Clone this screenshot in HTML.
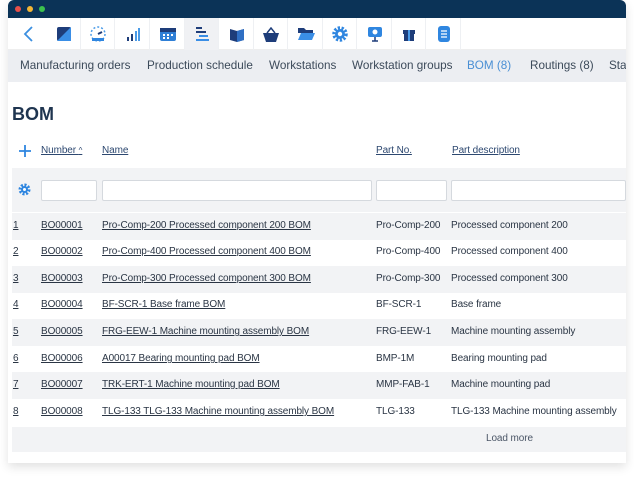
<!DOCTYPE html>
<html><head><style>
*{box-sizing:border-box;margin:0;padding:0}
body{width:634px;height:479px;background:#fff;font-family:"Liberation Sans",sans-serif;position:relative;overflow:hidden}
.win{position:absolute;left:8px;top:0;width:618px;height:463px;background:#fff;box-shadow:0 4px 10px rgba(0,0,0,.12);border-radius:6px 6px 0 0;overflow:hidden}
.top{height:18px;background:#0b3357;position:relative}
.dot{position:absolute;top:6px;width:6px;height:6px;border-radius:50%}
.tool{height:32px;position:relative;border-bottom:1px solid #eee}
.cell{position:absolute;top:0;height:32px;width:34px;border-right:1px solid #eef0f3;display:flex;align-items:center;justify-content:center}
.tabs{height:32px;background:#eceef2;font-size:11.7px;color:#3c4a5a;position:relative}
.tabs span{position:absolute;top:9px;white-space:nowrap}
h1{position:absolute;left:12px;top:104px;font-size:18px;color:#1f3550;font-weight:bold}
.a{position:absolute;font-size:10px;letter-spacing:-0.1px;color:#2a3544;white-space:nowrap}
.u{text-decoration:underline}
.hdr{color:#2d4870}
.row{position:absolute;left:12px;width:614px;height:26.5px}
.g{background:#f2f3f5}
.inp{position:absolute;top:180px;height:21px;background:#fff;border:1px solid #d5d9de;border-radius:2px}
</style></head><body>
<div class="win">
<div class="top"><div class="dot" style="left:7px;background:#e8504a"></div><div class="dot" style="left:19px;background:#f4b635"></div><div class="dot" style="left:31px;background:#3cc24d"></div></div>
<div class="tool">
<div class="cell" style="left:4px;border:none"><svg width="12" height="16"><path d="M9 1L2 8l7 7" stroke="#3b8fe0" stroke-width="1.8" fill="none"/></svg></div>
<div class="cell" style="left:39px"><svg width="14" height="14"><rect width="14" height="14" rx="2" fill="#1e3d7a"/><path d="M14 0V14H0z" fill="#3a8ee6"/></svg></div>
<div class="cell" style="left:73px"><svg width="18" height="16"><circle cx="9" cy="8" r="7" fill="none" stroke="#4a9be8" stroke-width="1.5" stroke-dasharray="2 2"/><path d="M9 8l4-2" stroke="#1e3d7a" stroke-width="2"/><path d="M3 12h12v3H3z" fill="#2f86e0"/></svg></div>
<div class="cell" style="left:108px"><svg width="14" height="14"><rect x="1" y="10" width="2" height="4" fill="#1e3d7a"/><rect x="5" y="7" width="2" height="7" fill="#1e3d7a"/><rect x="9" y="4" width="2" height="10" fill="#4a9be8"/><rect x="12" y="1" width="2" height="13" fill="#4a9be8"/></svg></div>
<div class="cell" style="left:143px"><svg width="16" height="14"><rect y="1" width="16" height="13" rx="2" fill="#2f7fd6"/><rect y="1" width="16" height="4" fill="#1e3d7a"/><g fill="#fff"><rect x="3" y="7" width="2" height="2"/><rect x="7" y="7" width="2" height="2"/><rect x="11" y="7" width="2" height="2"/><rect x="3" y="10" width="2" height="2"/><rect x="7" y="10" width="2" height="2"/></g></svg></div>
<div class="cell" style="left:177px;background:#f0f1f4"><svg width="18" height="16"><g stroke-width="2"><path d="M3 2h6" stroke="#1e3d7a"/><path d="M3 6h10" stroke="#1e3d7a"/><path d="M6 10h9" stroke="#3a8ee6"/><path d="M3 14h13" stroke="#3a8ee6"/></g></svg></div>
<div class="cell" style="left:212px"><svg width="16" height="15"><path d="M1 2l7 2 7-2v11l-7 2-7-2z" fill="#1e3d7a"/><path d="M8 4v11l7-2V2z" fill="#2f6fc4"/></svg></div>
<div class="cell" style="left:246px"><svg width="18" height="15"><path d="M5 6l4-5 4 5" stroke="#1e3d7a" stroke-width="1.5" fill="none"/><path d="M1 6h16l-3 9H4z" fill="#1e3d7a"/></svg></div>
<div class="cell" style="left:281px"><svg width="18" height="14"><path d="M1 1h6l2 2h7v3H1z" fill="#1e3d7a"/><path d="M1 13l3-7h14l-3 7z" fill="#3a8ee6"/></svg></div>
<div class="cell" style="left:315px"><svg width="16" height="16"><circle cx="8" cy="8" r="6" fill="none" stroke="#2f86e0" stroke-width="3.5" stroke-dasharray="2.2 1.5"/><circle cx="8" cy="8" r="5" fill="#2f86e0"/><circle cx="8" cy="8" r="2.2" fill="#fff"/></svg></div>
<div class="cell" style="left:350px"><svg width="16" height="16"><rect x="1" y="1" width="14" height="10" rx="2" fill="#2f86e0"/><circle cx="8" cy="6" r="2.5" fill="#fff"/><path d="M8 11v4M5 15h6" stroke="#1e3d7a" stroke-width="1.5"/></svg></div>
<div class="cell" style="left:384px"><svg width="14" height="16"><rect x="1" y="4" width="12" height="4" fill="#1e3d7a"/><rect x="2" y="8" width="10" height="7" fill="#1e3d7a"/><rect x="6" y="4" width="2" height="11" fill="#4a9be8"/></svg></div>
<div class="cell" style="left:419px"><svg width="12" height="16"><rect x="0" y="0" width="12" height="16" rx="3" fill="#2f86e0"/><path d="M3 5h6M3 8h6M3 11h6" stroke="#fff" stroke-width="1.3"/></svg></div>
</div>
<div class="tabs">
<span style="left:12px">Manufacturing orders</span><span style="left:139px">Production schedule</span><span style="left:261px">Workstations</span><span style="left:344px">Workstation groups</span><span style="left:459px;color:#4a8fd4">BOM (8)</span><span style="left:522px">Routings (8)</span><span style="left:601px">Sta</span>
</div>
</div>
<h1>BOM</h1>
<svg style="position:absolute;left:19px;top:145px" width="12" height="12"><path d="M6 0v12M0 6h12" stroke="#2f86e0" stroke-width="1.8"/></svg>
<div class="a u hdr" style="left:41px;top:145px">Number <span style="text-decoration:none;font-size:8px">^</span></div>
<div class="a u hdr" style="left:102px;top:145px">Name</div>
<div class="a u hdr" style="left:376px;top:145px">Part No.</div>
<div class="a u hdr" style="left:452px;top:145px">Part description</div>
<div class="row g" style="top:168px;height:44px"></div>
<svg style="position:absolute;left:18px;top:183px" width="13" height="13"><circle cx="6.5" cy="6.5" r="4.5" fill="none" stroke="#2f86e0" stroke-width="3" stroke-dasharray="2 1.5"/><circle cx="6.5" cy="6.5" r="3.5" fill="#2f86e0"/><circle cx="6.5" cy="6.5" r="1.5" fill="#fff"/></svg>
<div class="inp" style="left:41px;width:56px"></div><div class="inp" style="left:102px;width:270px"></div><div class="inp" style="left:376px;width:71px"></div><div class="inp" style="left:451px;width:175px"></div>
<div class="row g" style="top:213px"></div><div class="row" style="top:239.5px"></div><div class="row g" style="top:266px"></div><div class="row" style="top:292.5px"></div><div class="row g" style="top:319px"></div><div class="row" style="top:345.5px"></div><div class="row g" style="top:372px"></div><div class="row" style="top:398.5px"></div><div class="row g" style="top:427px;height:25px"></div>
<div class="a u" style="left:13px;top:220px">1</div><div class="a u" style="left:41px;top:220px">BO00001</div><div class="a u" style="left:102px;top:220px">Pro-Comp-200 Processed component 200 BOM</div><div class="a" style="left:376px;top:220px">Pro-Comp-200</div><div class="a" style="left:451px;top:220px">Processed component 200</div>
<div class="a u" style="left:13px;top:246px">2</div><div class="a u" style="left:41px;top:246px">BO00002</div><div class="a u" style="left:102px;top:246px">Pro-Comp-400 Processed component 400 BOM</div><div class="a" style="left:376px;top:246px">Pro-Comp-400</div><div class="a" style="left:451px;top:246px">Processed component 400</div>
<div class="a u" style="left:13px;top:273px">3</div><div class="a u" style="left:41px;top:273px">BO00003</div><div class="a u" style="left:102px;top:273px">Pro-Comp-300 Processed component 300 BOM</div><div class="a" style="left:376px;top:273px">Pro-Comp-300</div><div class="a" style="left:451px;top:273px">Processed component 300</div>
<div class="a u" style="left:13px;top:299px">4</div><div class="a u" style="left:41px;top:299px">BO00004</div><div class="a u" style="left:102px;top:299px">BF-SCR-1 Base frame BOM</div><div class="a" style="left:376px;top:299px">BF-SCR-1</div><div class="a" style="left:451px;top:299px">Base frame</div>
<div class="a u" style="left:13px;top:326px">5</div><div class="a u" style="left:41px;top:326px">BO00005</div><div class="a u" style="left:102px;top:326px">FRG-EEW-1 Machine mounting assembly BOM</div><div class="a" style="left:376px;top:326px">FRG-EEW-1</div><div class="a" style="left:451px;top:326px">Machine mounting assembly</div>
<div class="a u" style="left:13px;top:353px">6</div><div class="a u" style="left:41px;top:353px">BO00006</div><div class="a u" style="left:102px;top:353px">A00017 Bearing mounting pad BOM</div><div class="a" style="left:376px;top:353px">BMP-1M</div><div class="a" style="left:451px;top:353px">Bearing mounting pad</div>
<div class="a u" style="left:13px;top:379px">7</div><div class="a u" style="left:41px;top:379px">BO00007</div><div class="a u" style="left:102px;top:379px">TRK-ERT-1 Machine mounting pad BOM</div><div class="a" style="left:376px;top:379px">MMP-FAB-1</div><div class="a" style="left:451px;top:379px">Machine mounting pad</div>
<div class="a u" style="left:13px;top:406px">8</div><div class="a u" style="left:41px;top:406px">BO00008</div><div class="a u" style="left:102px;top:406px">TLG-133 TLG-133 Machine mounting assembly BOM</div><div class="a" style="left:376px;top:406px">TLG-133</div><div class="a" style="left:451px;top:406px">TLG-133 Machine mounting assembly</div>
<div class="a" style="left:486px;top:433px;color:#4a5566">Load more</div>
</body></html>
